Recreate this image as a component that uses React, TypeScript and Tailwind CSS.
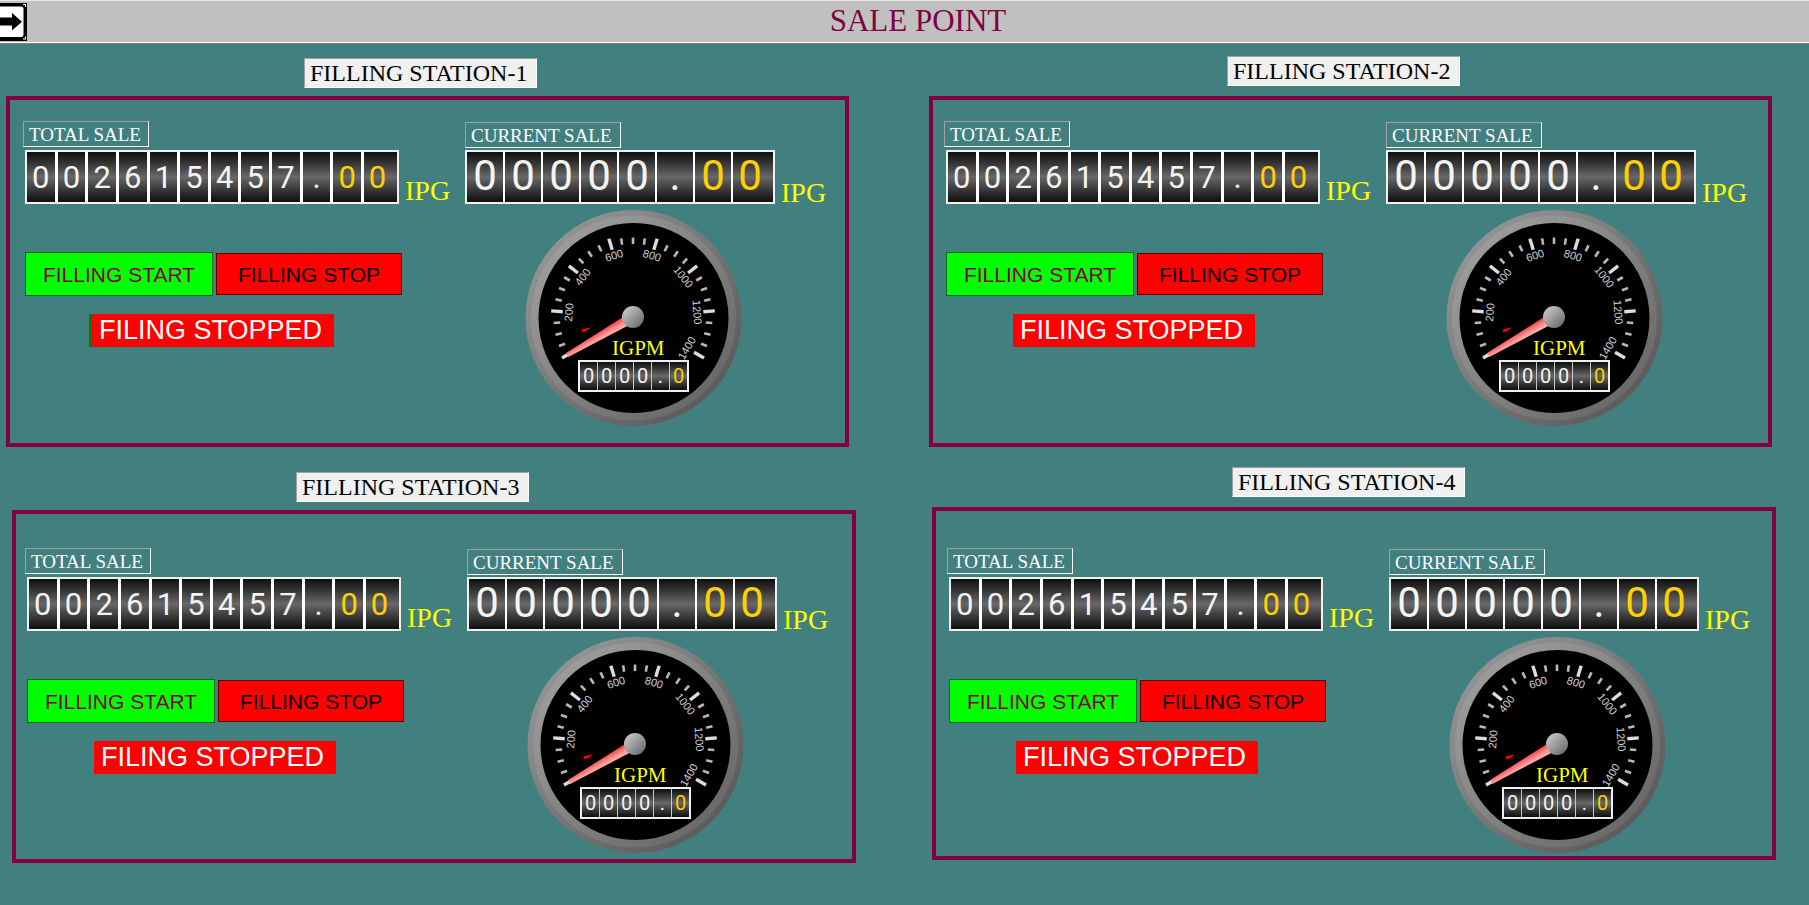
import clsx from "clsx";

type Station = {
  id: number;
  totalSale: string;
  currentSale: string;
  flow: string;
  pending?: boolean;
  headingClass: string;
  panelClass: string;
};

const topRow: Station[] = [
  {
    id: 1,
    totalSale: "002615457.00",
    currentSale: "00000.00",
    flow: "0000.0",
    pending: true,
    headingClass: "pt-3.5 pb-2 pl-[298px]",
    panelClass: "min-h-[351px] pt-[21px] pl-[15px]",
  },
  {
    id: 2,
    totalSale: "002615457.00",
    currentSale: "00000.00",
    flow: "0000.0",
    headingClass: "pt-3 pb-2.5 pl-[298px]",
    panelClass: "min-h-[351px] pt-[21px] pl-[13px]",
  },
];

const bottomRow: Station[] = [
  {
    id: 3,
    totalSale: "002615457.00",
    currentSale: "00000.00",
    flow: "0000.0",
    headingClass: "pt-[25px] pb-2 pl-[284px]",
    panelClass: "min-h-[353px] pt-[34px] pl-[11px]",
  },
  {
    id: 4,
    totalSale: "002615457.00",
    currentSale: "00000.00",
    flow: "0000.0",
    headingClass: "pt-5 pb-2.5 pl-[300px]",
    panelClass: "min-h-[353px] pt-[37px] pl-[13px]",
  },
];

const counterSizes = {
  total: {
    box: "h-[54px] w-[374px] border-2",
    cell: "border-r-[3px] text-[31px]",
    last: "w-[33px] pr-1.5 text-[31px]",
  },
  current: {
    box: "h-[54px] w-[310px] border-2",
    cell: "border-r-2 pb-0.5 text-[42px]",
    last: "w-10 pr-1.5 pb-0.5 text-[42px]",
  },
  flow: {
    box: "h-8 w-[111px] border-2",
    cell: "border-r border-[#c8c8c8] text-[20px]",
    last: "w-[17px] text-[20px]",
  },
};

function Counter({ value, size }: { value: string; size: keyof typeof counterSizes }) {
  const styles = counterSizes[size];
  const point = value.indexOf(".");
  const digits = value.split("");

  return (
    <output
      className={clsx(
        "flex border-[#f0f0f0] font-['Roboto','Liberation_Sans',sans-serif] leading-none",
        styles.box,
      )}
    >
      {digits.map((digit, i) => (
        <span
          key={i}
          className={clsx(
            "flex items-center justify-center bg-linear-to-b from-[#101010] via-[#686868] to-[#101010]",
            i === digits.length - 1 ? styles.last : ["flex-1", styles.cell],
            size !== "flow" && "border-white",
            i > point ? "text-[#ffd000]" : "text-[#f4f4f4]",
          )}
        >
          {digit}
        </span>
      ))}
    </output>
  );
}

function Tag({ children, className }: { children: string; className: string }) {
  return (
    <div
      className={clsx(
        "flex h-[26px] items-center border border-t-[#a0a0a0] border-r-white border-b-white border-l-[#a0a0a0] pl-[5px] text-[19px] leading-none whitespace-nowrap text-white",
        className,
      )}
    >
      {children}
    </div>
  );
}

const SWEEP = 240;
const MAX_FLOW = 1400;
const toAngle = (flow: number) => (flow / MAX_FLOW) * SWEEP - SWEEP / 2;

const ticks = Array.from({ length: 29 }, (_, i) => i * 50);
const tickLabels = [200, 400, 600, 800, 1000, 1200, 1400];

function Gauge({ flow }: { flow: string }) {
  return (
    <div className="relative mt-1.5 ml-[60px] size-[217px]">
      <svg viewBox="0 0 217 217" className="block size-full">
        <defs>
          <linearGradient id="rim" x1="0.15" y1="0.15" x2="0.85" y2="0.85">
            <stop offset="0" stopColor="#929292" />
            <stop offset="1" stopColor="#5c5c5c" />
          </linearGradient>
          <linearGradient id="bezel" x1="0.15" y1="0.15" x2="0.85" y2="0.85">
            <stop offset="0" stopColor="#9b9b9b" />
            <stop offset="1" stopColor="#6a6a6a" />
          </linearGradient>
          <linearGradient id="hub" x1="0.1" y1="0.1" x2="0.9" y2="0.9">
            <stop offset="0" stopColor="#c8c8c8" />
            <stop offset="1" stopColor="#6c6c6c" />
          </linearGradient>
          <linearGradient id="needle" x1="0" y1="0" x2="1" y2="0">
            <stop offset="0" stopColor="#ffb8b8" />
            <stop offset="0.45" stopColor="#ff9090" />
            <stop offset="1" stopColor="#ff3c3c" />
          </linearGradient>
        </defs>
        <circle cx="108.5" cy="108" r="108" fill="url(#rim)" />
        <circle cx="108.5" cy="108" r="102.5" fill="url(#bezel)" />
        <circle cx="108.5" cy="108" r="95" fill="#000" />
        <g transform="translate(108 107)">
          {ticks.map((tick) => (
            <line
              key={tick}
              y1={tick % 200 === 0 ? -82 : -79.5}
              y2={tick % 200 === 0 ? -70.5 : -73}
              stroke={tick % 200 === 0 ? "#dcdcdc" : "#b8b8b8"}
              strokeWidth={tick % 200 === 0 ? 3.4 : 2.6}
              transform={`rotate(${toAngle(tick)})`}
            />
          ))}
          {tickLabels.map((label) => {
            const flipped = label === MAX_FLOW;
            return (
              <text
                key={label}
                y={flipped ? 66 : -60.5}
                textAnchor="middle"
                fontSize="11"
                fontFamily="Liberation Sans, sans-serif"
                fill="#cfcfcf"
                transform={`rotate(${toAngle(label) + (flipped ? 180 : 0)})`}
              >
                {label}
              </text>
            );
          })}
          <path d="M-51.5 12.5 L-42 10.2 L-46 13.6 L-50.5 15.6 Z" fill="#ff0000" />
          <path
            d="M-5 -9 L5 -9 L2.2 -76 L-2.2 -76 Z"
            fill="url(#needle)"
            transform={`rotate(${toAngle(Number(flow))})`}
          />
          <circle r="11" fill="url(#hub)" />
        </g>
      </svg>
      <span className="absolute top-[126px] left-[87px] text-[21px] leading-[24px] text-[#ffff00]">
        IGPM
      </span>
      <div className="absolute top-[150px] left-[53px]">
        <Counter value={flow} size="flow" />
      </div>
    </div>
  );
}

function StationPanel({ station }: { station: Station }) {
  return (
    <section className="flex flex-col">
      <div className={station.headingClass}>
        <h2 className="flex h-[30px] w-[233px] items-center border border-t-[#a0a0a0] border-r-white border-b-white border-l-[#a0a0a0] bg-[#f0f0f0] pb-px pl-[5px] text-[24px] leading-none whitespace-nowrap text-black">
          FILLING STATION-{station.id}
        </h2>
      </div>

      <div className={clsx("flex border-4 border-[#800040]", station.panelClass)}>
        <div className="w-[440px] shrink-0">
          <Tag className="mb-[3px] -ml-0.5 w-[126px]">TOTAL SALE</Tag>
          <div className="flex h-[54px] items-end gap-1.5">
            <Counter value={station.totalSale} size="total" />
            <span className="text-[28px] leading-[26px] text-[#ffff00]">IPG</span>
          </div>

          <div className="mt-12 flex h-11 items-center gap-[3px] font-['Liberation_Sans',sans-serif] text-[21px] leading-none">
            <button
              type="button"
              className="h-11 w-[188px] border border-[#0a6a20] bg-[#00ff00] whitespace-nowrap text-[#800040]"
            >
              FILLING START
            </button>
            <button
              type="button"
              className="h-[42px] w-[186px] border border-[#600000] bg-[#ff0000] whitespace-nowrap text-black"
            >
              FILLING STOP
            </button>
          </div>

          <p
            className={clsx(
              "mt-[18px] ml-[67px] flex h-[33px] w-[242px] items-center bg-[#ff0000] pl-[7px] font-['Liberation_Sans',sans-serif] text-[27px] leading-none whitespace-nowrap text-white",
              station.pending && "shadow-[-3px_0_0_#008000]",
            )}
          >
            FILING STOPPED
          </p>
        </div>

        <div>
          <Tag className="mt-px mb-0.5 w-[156px]">CURRENT SALE</Tag>
          <div className="flex h-[54px] items-end gap-1.5">
            <Counter value={station.currentSale} size="current" />
            <span className="text-[28px] leading-[22px] text-[#ffff00]">IPG</span>
          </div>
          <Gauge flow={station.flow} />
        </div>
      </div>
    </section>
  );
}

function ExitIcon() {
  return (
    <svg viewBox="0 0 27 38" className="block h-[38px] w-[27px]">
      <rect width="27" height="38" fill="#000" />
      <path d="M0 3.5 H21 Q23.5 3.5 23.5 6 V31.5 Q23.5 34 21 34 H0 Z" fill="#fff" />
      <path d="M23 1.5 h2.5 v2.5 M23 36 h2.5 v-2.5" stroke="#fff" strokeWidth="1.2" fill="none" />
      <path d="M0 14.6 H12 V10 L22 18.7 L12 27.6 V22.4 H0 Z" fill="#000" />
    </svg>
  );
}

export default function App() {
  return (
    <main className="min-h-screen bg-[#428080] font-['Liberation_Serif',serif]">
      <header className="flex h-11 items-center border-t border-b border-t-[#e8e8e8] border-b-[#808080] bg-[#c0c0c0] shadow-[inset_0_-1px_0_#ffffff]">
        <button type="button" aria-label="Exit">
          <ExitIcon />
        </button>
        <h1 className="flex-1 pb-1 text-center text-[31px] leading-none text-[#800040]">
          SALE POINT
        </h1>
      </header>

      <div className="grid grid-cols-2 gap-x-20 pr-[37px] pl-1.5">
        {topRow.map((station) => (
          <StationPanel key={station.id} station={station} />
        ))}
      </div>
      <div className="grid grid-cols-2 gap-x-[76px] pr-[33px] pl-3">
        {bottomRow.map((station) => (
          <StationPanel key={station.id} station={station} />
        ))}
      </div>
    </main>
  );
}
